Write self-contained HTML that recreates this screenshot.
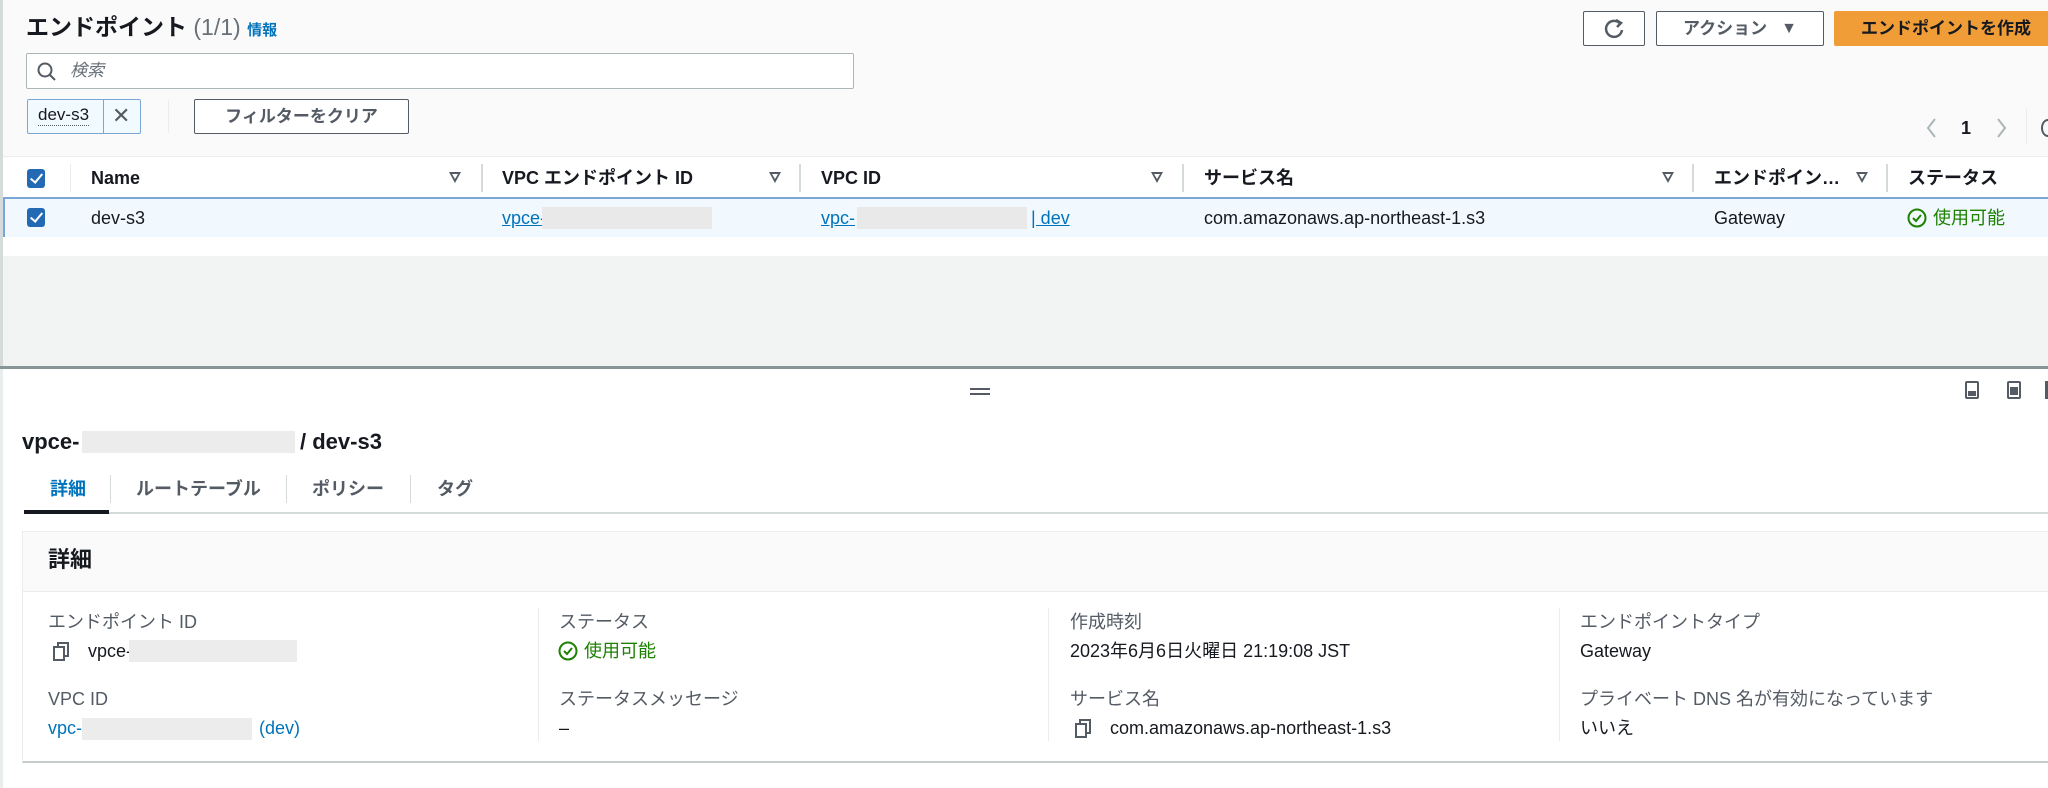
<!DOCTYPE html>
<html><head><meta charset="utf-8">
<style>
*{margin:0;padding:0;box-sizing:border-box}
body{width:2048px;height:788px;overflow:hidden;background:#fff;font-family:"Liberation Sans","Noto Sans CJK JP",sans-serif;color:#16191f;font-size:18px;line-height:22px;position:relative}
.a{position:absolute;white-space:nowrap}
.lnk{color:#0073bb}
.red{position:absolute;background:#e9e9e9}
.sep{position:absolute;width:2px;background:#d5dbdb}
.sort{position:absolute;width:0;height:0;border-left:6px solid transparent;border-right:6px solid transparent;border-top:11px solid #545b64}
.sort:after{content:"";position:absolute;left:-3px;top:-9px;border-left:3px solid transparent;border-right:3px solid transparent;border-top:5px solid #fff}
.cb{position:absolute;width:18px;height:19px;background:#2469b3;border-radius:3px}
.cb:after{content:"";position:absolute;left:6px;top:2px;width:5px;height:10px;border:solid #fff;border-width:0 2px 2px 0;transform:rotate(40deg)}
.lbl{color:#545b64}
.btn{display:flex;align-items:center;justify-content:center}
</style></head><body>
<div class="a" style="left:0;top:0;width:2048px;height:157px;background:#fafafa"></div>
<div class="a" style="left:0;top:0;width:3px;height:370px;background:#d5dbdb"></div>
<div class="a" style="left:26px;top:14px;font-size:23px;line-height:26px;font-weight:bold">エンドポイント <span style="font-weight:normal;color:#687078">(1/1)</span> <span class="lnk" style="font-size:15px;font-weight:bold">情報</span></div>
<div class="a btn" style="left:1583px;top:11px;width:62px;height:35px;border:1px solid #545b64;border-radius:2px;background:#fff"><svg width="24" height="24" viewBox="0 0 24 24"><path d="M18 6.5 A8 8 0 1 0 20 13" fill="none" stroke="#545b64" stroke-width="2.5"/><path d="M14 3 L19 6 L15 10" fill="none" stroke="#545b64" stroke-width="2.5"/></svg></div>
<div class="a btn" style="left:1656px;top:11px;width:168px;height:35px;border:1px solid #545b64;border-radius:2px;background:#fff;font-size:17px;font-weight:bold;color:#545b64">アクション<span style="font-size:16px;margin-left:14px">▼</span></div>
<div class="a btn" style="left:1834px;top:11px;width:220px;height:35px;background:#f09d38;border-radius:2px;font-size:17px;font-weight:bold;justify-content:flex-start;padding-left:27px">エンドポイントを作成</div>
<div class="a" style="left:26px;top:53px;width:828px;height:36px;border:1px solid #aab7b8;border-radius:2px;background:#fff"></div>
<svg class="a" style="left:36px;top:61px" width="22" height="22"><circle cx="9" cy="9" r="6.5" fill="none" stroke="#545b64" stroke-width="2"/><path d="M14 14 L19 19" stroke="#545b64" stroke-width="2"/></svg>
<div class="a" style="left:70px;top:60px;color:#687078;font-style:italic;font-size:17px">検索</div>
<div class="a" style="left:27px;top:99px;width:114px;height:35px;border:1px solid #7aa6d6;border-radius:2px;background:#f1faff"></div>
<div class="a" style="left:103px;top:99px;width:1px;height:35px;background:#7aa6d6"></div>
<div class="a" style="left:38px;top:105px;font-size:17px;border-bottom:1px dotted #545b64;line-height:20px">dev-s3</div>
<div class="a" style="left:112px;top:105px;font-size:22px;color:#545b64">✕</div>
<div class="a" style="left:168px;top:100px;width:1px;height:33px;background:#eaeded"></div>
<div class="a btn" style="left:194px;top:99px;width:215px;height:35px;border:1px solid #545b64;border-radius:2px;background:#fff;font-size:17px;font-weight:bold;color:#545b64">フィルターをクリア</div>
<svg class="a" style="left:1922px;top:117px" width="20" height="22"><path d="M13 2 L6 11 L13 20" fill="none" stroke="#aab7b8" stroke-width="2"/></svg>
<div class="a" style="left:1961px;top:117px;font-size:18px;font-weight:bold">1</div>
<svg class="a" style="left:1992px;top:117px" width="20" height="22"><path d="M6 2 L13 11 L6 20" fill="none" stroke="#aab7b8" stroke-width="2"/></svg>
<div class="a" style="left:2026px;top:108px;width:1px;height:36px;background:#eaeded"></div>
<div class="a" style="left:2041px;top:119px;width:14px;height:18px;border:2px solid #545b64;border-radius:50%"></div>
<div class="a" style="left:3px;top:156px;width:2045px;height:1px;background:#eaeded"></div>
<div class="a" style="left:3px;top:157px;width:2045px;height:40px;background:#fff"></div>
<div class="cb" style="left:27px;top:169px"></div>
<div class="a" style="left:70px;top:164px;width:1px;height:28px;background:#eaeded"></div>
<div class="a" style="left:91px;top:167px;font-weight:bold">Name</div>
<div class="sort" style="left:449px;top:172px"></div><div class="sep" style="left:481px;top:164px;height:28px"></div>
<div class="a" style="left:502px;top:167px;font-weight:bold">VPC エンドポイント ID</div>
<div class="sort" style="left:769px;top:172px"></div><div class="sep" style="left:799px;top:164px;height:28px"></div>
<div class="a" style="left:821px;top:167px;font-weight:bold">VPC ID</div>
<div class="sort" style="left:1151px;top:172px"></div><div class="sep" style="left:1182px;top:164px;height:28px"></div>
<div class="a" style="left:1204px;top:167px;font-weight:bold">サービス名</div>
<div class="sort" style="left:1662px;top:172px"></div><div class="sep" style="left:1692px;top:164px;height:28px"></div>
<div class="a" style="left:1714px;top:167px;font-weight:bold">エンドポイン…</div>
<div class="sort" style="left:1856px;top:172px"></div><div class="sep" style="left:1886px;top:164px;height:28px"></div>
<div class="a" style="left:1908px;top:167px;font-weight:bold">ステータス</div>
<div class="a" style="left:3px;top:197px;width:2045px;height:40px;background:#f1f8fe;border-top:2px solid #7aa6d6;border-left:2px solid #7aa6d6"></div>
<div class="cb" style="left:27px;top:208px"></div>
<div class="a" style="left:91px;top:207px">dev-s3</div>
<div class="a lnk" style="left:502px;top:207px;text-decoration:underline">vpce-</div>
<div class="red" style="left:542px;top:207px;width:170px;height:22px"></div>
<div class="a lnk" style="left:821px;top:207px;text-decoration:underline">vpc-</div>
<div class="red" style="left:857px;top:207px;width:170px;height:22px"></div>
<div class="a lnk" style="left:1031px;top:207px;text-decoration:underline">| dev</div>
<div class="a" style="left:1204px;top:207px">com.amazonaws.ap-northeast-1.s3</div>
<div class="a" style="left:1714px;top:207px">Gateway</div>
<svg class="a" style="left:1907px;top:208px" width="20" height="20"><circle cx="10" cy="10" r="8.5" fill="none" stroke="#1d8102" stroke-width="2"/><path d="M6 10 L9 13 L14 7" fill="none" stroke="#1d8102" stroke-width="2"/></svg>
<div class="a" style="left:1933px;top:207px;color:#1d8102">使用可能</div>
<div class="a" style="left:3px;top:256px;width:2045px;height:111px;background:#f2f3f3"></div>
<div class="a" style="left:0;top:366px;width:2048px;height:3px;background:#879596"></div>
<div class="a" style="left:970px;top:388px;width:20px;height:2px;background:#545b64"></div>
<div class="a" style="left:970px;top:393px;width:20px;height:2px;background:#545b64"></div>
<div class="a" style="left:1965px;top:381px;width:14px;height:18px;border:2px solid #545b64;border-radius:2px"><div style="position:absolute;left:1px;bottom:1px;width:8px;height:5px;background:#545b64"></div></div>
<div class="a" style="left:2007px;top:381px;width:14px;height:18px;border:2px solid #545b64;border-radius:2px"><div style="position:absolute;left:1px;top:4px;width:8px;height:8px;background:#545b64"></div></div>
<div class="a" style="left:2045px;top:381px;width:3px;height:18px;background:#545b64"></div>
<div class="a" style="left:0;top:369px;width:3px;height:419px;background:#eaeded"></div>
<div class="a" style="left:22px;top:429px;font-size:22px;line-height:26px;font-weight:bold">vpce-</div>
<div class="red" style="left:82px;top:431px;width:213px;height:22px;background:#ececec"></div>
<div class="a" style="left:300px;top:429px;font-size:22px;line-height:26px;font-weight:bold">/ dev-s3</div>
<div class="a" style="left:24px;top:512px;width:2024px;height:2px;background:#d5dbdb"></div>
<div class="a" style="left:24px;top:510px;width:85px;height:4px;background:#16191f"></div>
<div class="a lnk" style="left:50px;top:478px;font-weight:bold">詳細</div>
<div class="a" style="left:110px;top:475px;width:1px;height:28px;background:#d5dbdb"></div>
<div class="a" style="left:136px;top:478px;font-weight:bold;color:#545b64">ルートテーブル</div>
<div class="a" style="left:286px;top:475px;width:1px;height:28px;background:#d5dbdb"></div>
<div class="a" style="left:312px;top:478px;font-weight:bold;color:#545b64">ポリシー</div>
<div class="a" style="left:410px;top:475px;width:1px;height:28px;background:#d5dbdb"></div>
<div class="a" style="left:437px;top:478px;font-weight:bold;color:#545b64">タグ</div>
<div class="a" style="left:22px;top:531px;width:2040px;height:232px;border:1px solid #eaeded;border-bottom:2px solid #c6cccc;background:#fff"></div>
<div class="a" style="left:23px;top:532px;width:2030px;height:60px;background:#fafafa;border-bottom:1px solid #eaeded"></div>
<div class="a" style="left:48px;top:547px;font-size:22px;line-height:26px;font-weight:bold">詳細</div>
<div class="a" style="left:538px;top:608px;width:1px;height:133px;background:#eaeded"></div>
<div class="a" style="left:1048px;top:608px;width:1px;height:133px;background:#eaeded"></div>
<div class="a" style="left:1559px;top:608px;width:1px;height:133px;background:#eaeded"></div>
<div class="a lbl" style="left:48px;top:611px">エンドポイント ID</div>
<svg class="a" style="left:52px;top:641px" width="20" height="22"><rect x="2" y="6" width="10" height="13" fill="none" stroke="#545b64" stroke-width="2"/><path d="M6 6 V2 H16 V15 H12" fill="none" stroke="#545b64" stroke-width="2"/></svg>
<div class="a" style="left:88px;top:640px">vpce-</div>
<div class="red" style="left:129px;top:640px;width:168px;height:22px;background:#ececec"></div>
<div class="a lbl" style="left:48px;top:688px">VPC ID</div>
<div class="a lnk" style="left:48px;top:717px">vpc-</div>
<div class="red" style="left:82px;top:718px;width:170px;height:22px;background:#ececec"></div>
<div class="a lnk" style="left:259px;top:717px">(dev)</div>
<div class="a lbl" style="left:559px;top:611px">ステータス</div>
<svg class="a" style="left:558px;top:641px" width="20" height="20"><circle cx="10" cy="10" r="8.5" fill="none" stroke="#1d8102" stroke-width="2"/><path d="M6 10 L9 13 L14 7" fill="none" stroke="#1d8102" stroke-width="2"/></svg>
<div class="a" style="left:584px;top:640px;color:#1d8102">使用可能</div>
<div class="a lbl" style="left:559px;top:688px">ステータスメッセージ</div>
<div class="a" style="left:559px;top:717px">–</div>
<div class="a lbl" style="left:1070px;top:611px">作成時刻</div>
<div class="a" style="left:1070px;top:640px">2023年6月6日火曜日 21:19:08 JST</div>
<div class="a lbl" style="left:1070px;top:688px">サービス名</div>
<svg class="a" style="left:1074px;top:718px" width="20" height="22"><rect x="2" y="6" width="10" height="13" fill="none" stroke="#545b64" stroke-width="2"/><path d="M6 6 V2 H16 V15 H12" fill="none" stroke="#545b64" stroke-width="2"/></svg>
<div class="a" style="left:1110px;top:717px">com.amazonaws.ap-northeast-1.s3</div>
<div class="a lbl" style="left:1580px;top:611px">エンドポイントタイプ</div>
<div class="a" style="left:1580px;top:640px">Gateway</div>
<div class="a lbl" style="left:1580px;top:688px">プライベート DNS 名が有効になっています</div>
<div class="a" style="left:1580px;top:717px">いいえ</div>
</body></html>
